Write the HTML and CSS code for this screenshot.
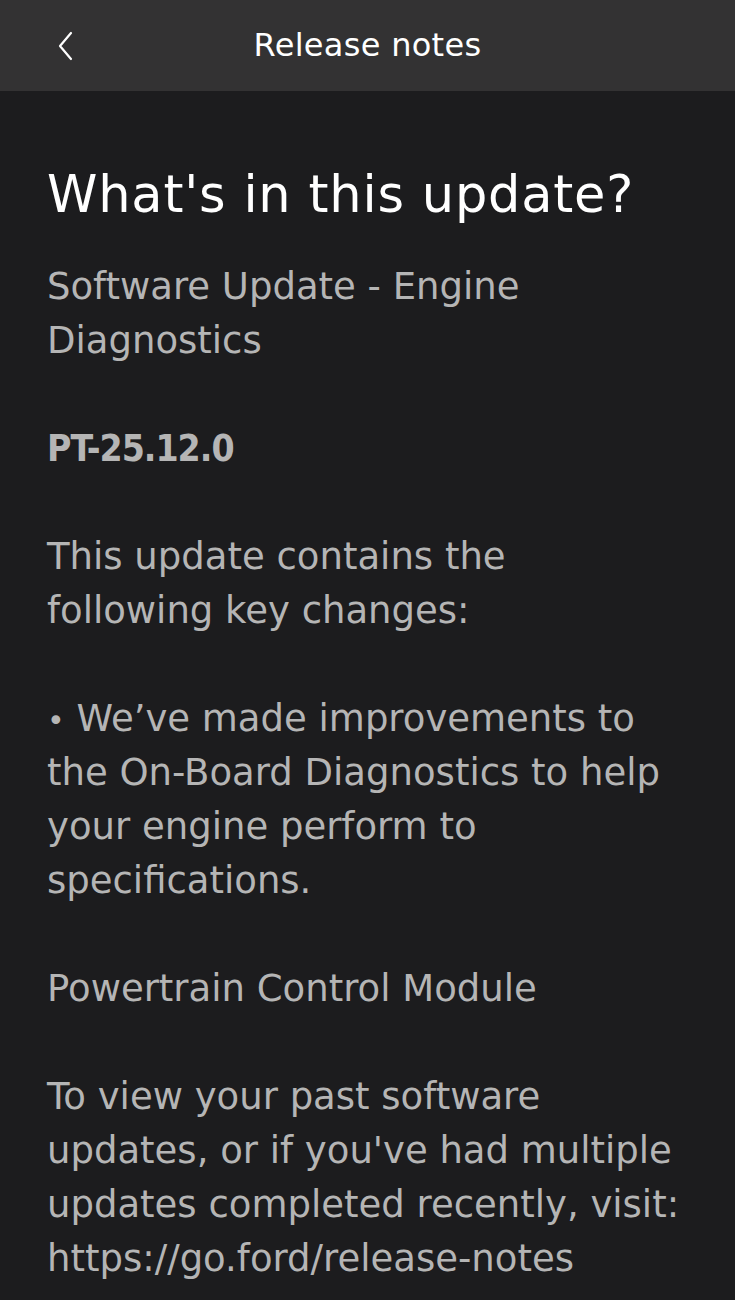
FILE: index.html
```html
<!DOCTYPE html>
<html lang="en">
<head>
<meta charset="utf-8">
<title>Release notes</title>
<link rel="stylesheet" href="styles.css">
</head>
<body>
<header class="topbar">
  <button class="back" aria-label="Back">
    <svg width="20" height="30" viewBox="0 0 20 30"><path d="M15 2 L4 15 L15 28" fill="none" stroke="#ffffff" stroke-width="2.2" stroke-linecap="round" stroke-linejoin="round"/></svg>
  </button>
  <h1 class="topbar-title">Release notes</h1>
</header>
<main class="content">
  <h2 class="heading">What's in this update?</h2>
  <p class="para">Software Update - Engine<br>Diagnostics</p>
  <p class="para strong">PT-25.12.0</p>
  <p class="para">This update contains the<br>following key changes:</p>
  <p class="para"><span class="bullet">•</span> We’ve made improvements to<br>the On-Board Diagnostics to help<br>your engine perform to<br>specifications.</p>
  <p class="para">Powertrain Control Module</p>
  <p class="para">To view your past software<br>updates, or if you've had multiple<br>updates completed recently, visit:<br>https://go.ford/release-notes</p>
</main>
</body>
</html>
```
FILE: styles.css
```css
html, body {
  margin: 0;
  padding: 0;
  background: #1c1c1e;
}
body {
  font-family: "DejaVu Sans", sans-serif;
  width: 735px;
  min-height: 1300px;
  overflow: hidden;
}
.topbar {
  height: 91px;
  background: #333233;
  display: flex;
  align-items: center;
  justify-content: center;
  position: relative;
}
.back {
  position: absolute;
  left: 56px;
  top: 31px;
  background: none;
  border: 0;
  padding: 0;
  width: 20px;
  height: 30px;
}
.back svg { display: block; }
.topbar-title {
  margin: 0;
  color: #ffffff;
  font-weight: normal;
  font-size: 32px;
  letter-spacing: 0.3px;
  line-height: 91px;
}
.content {
  padding: 69px 20px 0 47px;
}
.heading {
  margin: 0 0 30px;
  color: #ffffff;
  font-weight: normal;
  font-size: 51px;
  letter-spacing: 0.8px;
  line-height: 70px;
}
.para {
  margin: 0 0 54px;
  color: #b5b5b5;
  font-size: 37px;
  line-height: 54px;
  white-space: nowrap;
}
.bullet {
  font-size: 30px;
  line-height: 1;
}
.strong {
  font-family: "DejaVu Sans Condensed", "DejaVu Sans", sans-serif;
  font-weight: bold;
  letter-spacing: -1px;
}
```
